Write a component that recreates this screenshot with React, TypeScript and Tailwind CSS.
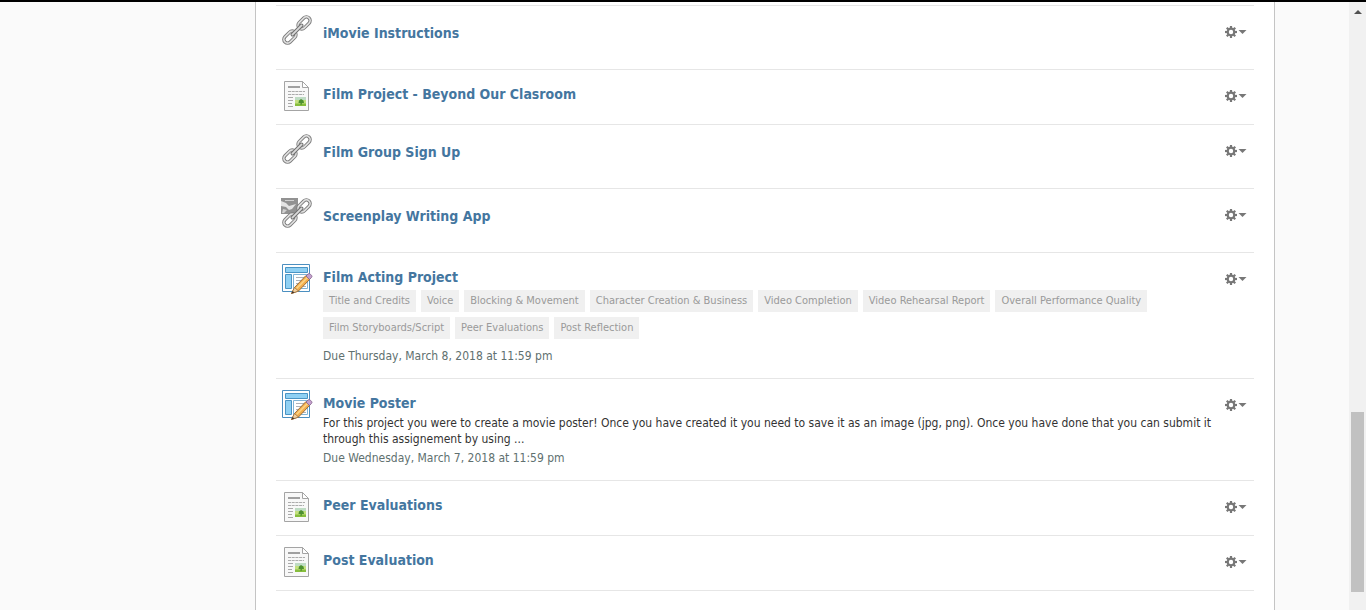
import React from "react";

type Kind = "link" | "thumbLink" | "page" | "assignment";

interface Item {
  title: string;
  kind: Kind;
  tags?: string[];
  text?: string;
  due?: string;
}

const items: Item[] = [
  { title: "iMovie Instructions", kind: "link" },
  { title: "Film Project - Beyond Our Clasroom", kind: "page" },
  { title: "Film Group Sign Up", kind: "link" },
  { title: "Screenplay Writing App", kind: "thumbLink" },
  {
    title: "Film Acting Project",
    kind: "assignment",
    tags: [
      "Title and Credits",
      "Voice",
      "Blocking & Movement",
      "Character Creation & Business",
      "Video Completion",
      "Video Rehearsal Report",
      "Overall Performance Quality",
      "Film Storyboards/Script",
      "Peer Evaluations",
      "Post Reflection",
    ],
    due: "Due Thursday, March 8, 2018 at 11:59 pm",
  },
  {
    title: "Movie Poster",
    kind: "assignment",
    text: "For this project you were to create a movie poster! Once you have created it you need to save it as an image (jpg, png). Once you have done that you can submit it through this assignement by using ...",
    due: "Due Wednesday, March 7, 2018 at 11:59 pm",
  },
  { title: "Peer Evaluations", kind: "page" },
  { title: "Post Evaluation", kind: "page" },
];

function Chain({ thumb = false }: { thumb?: boolean }) {
  return (
    <svg width="32" height="32" viewBox="0 0 32 32" fill="none" aria-hidden="true">
      {thumb && (
        <g>
          <path d="M0 1h17v16H0z" fill="#929292" />
          <path d="M0 4l5 2 3 3 7-2-4 5-3 1-3-3-5-1z" fill="#e4e4e4" />
          <path d="M4 3h9v1H4zM2 12l4 1-3 3H1z" fill="#d0d0d0" />
        </g>
      )}
      <g transform="rotate(-45 16 16)">
        <rect x="-1" y="12.300" width="14" height="7.400" rx="3.700" stroke="#7c7c7c" strokeWidth="3.400" />
        <rect x="-1" y="12.300" width="14" height="7.400" rx="3.700" stroke="#e2e2e2" strokeWidth="1.600" />
        <rect x="19" y="12.300" width="14" height="7.400" rx="3.700" stroke="#7c7c7c" strokeWidth="3.400" />
        <rect x="19" y="12.300" width="14" height="7.400" rx="3.700" stroke="#e2e2e2" strokeWidth="1.600" />
        <path d="M9.500 16h13" stroke="#707070" strokeWidth="3.800" strokeLinecap="round" />
        <path d="M9.500 16h13" stroke="#dadada" strokeWidth="1.800" strokeLinecap="round" />
      </g>
    </svg>
  );
}

function PageIcon() {
  return (
    <svg width="32" height="32" viewBox="0 0 32 32" aria-hidden="true">
      <path d="M3.500 1.500h18l6 6v23h-24z" fill="#f8f8f8" stroke="#a4a4a4" />
      <path d="M21.500 1.500v6h6z" fill="#fff" stroke="#a4a4a4" />
      <path d="M7 7h12" stroke="#a0a0a0" strokeWidth="2" />
      <path d="M7 11.500h17M7 14.500h16" stroke="#acacac" strokeDasharray="3 .7" />
      <path d="M7 17.500h5M7 20.500h5M7 23.500h4M7 26.500h5" stroke="#a8a8a8" />
      <path d="M14 17h11v9H14z" fill="#c3e07e" />
      <path d="M14 17h11v3H14z" fill="#bfdcc4" />
      <path d="M14 23.500h11V26H14z" fill="#86bd3c" />
      <path d="M20.500 25h-1v-2H17.500l.5-2.500 2-1.500 2.500 1.500.5 2.500h-2z" fill="#4c9030" />
    </svg>
  );
}

function AssignmentIcon() {
  return (
    <svg width="32" height="32" viewBox="0 0 32 32" aria-hidden="true">
      <path d="M1.500 1.500h27v27h-27z" fill="#fff" stroke="#4b8fc0" />
      <path d="M4.500 4.500h22v5h-22z" fill="#8fd0f3" stroke="#4a94c4" />
      <path d="M4.500 11.500h6v14h-6z" fill="#8fd0f3" stroke="#4a94c4" />
      <path d="M12.500 25.500v-14h14v14z" fill="none" stroke="#7fb4d6" />
      <path d="M15 14.500h8M15 17.500h6M15 20.500h3M24 20.500h1M22 23.500h3" stroke="#aeb2b8" />
      <path d="M13.500 24.500L25 12.500l4 3.500-11.500 12L10.500 30.500z" fill="#f3ae4c" stroke="#9a6c38" strokeLinejoin="round" />
      <path d="M15.500 25.500L27 14" stroke="#fcd588" strokeWidth="1.600" />
      <path d="M13.500 24.500l-3 6 7-2.500z" fill="#f0d0a0" stroke="#9a6c38" strokeWidth=".7" />
      <path d="M10.500 30.500l1.200-2.600 1.800 1.500z" fill="#403028" />
      <path d="M25 13l2-2q1.200-1 2.500.3l1 1q1 1.200 0 2.200L28.500 16.500z" fill="#c3a0cc" stroke="#82608b" strokeWidth=".8" />
    </svg>
  );
}

function ItemIcon({ kind }: { kind: Kind }) {
  if (kind === "page") return <PageIcon />;
  if (kind === "assignment") return <AssignmentIcon />;
  return <Chain thumb={kind === "thumbLink"} />;
}

const teeth = [0, 45, 90, 135, 180, 225, 270, 315];

function GearButton({ title }: { title: string }) {
  return (
    <button type="button" aria-label={`Options for ${title}`} className="mt-5 flex h-3 shrink-0 items-center">
      <svg width="22" height="12" viewBox="0 0 22 12" aria-hidden="true">
        <circle cx="6" cy="6" r="3.300" fill="none" stroke="#777" strokeWidth="2.200" />
        {teeth.map((a) => (
          <path key={a} d="M4.900 0h2.200v2.500H4.900z" fill="#777" transform={`rotate(${a} 6 6)`} />
        ))}
        <path d="M13.500 4h8l-4 4z" fill="#777" />
      </svg>
    </button>
  );
}

function Row({ item }: { item: Item }) {
  const isLink = item.kind === "link" || item.kind === "thumbLink";
  return (
    <li className="flex items-start border-b border-[#e6e6e6] pr-[7px] pl-[5px]">
      <div className={isLink ? "w-[42px] shrink-0 pt-2" : "w-[42px] shrink-0 pt-2.5"}>
        <ItemIcon kind={item.kind} />
      </div>
      <div className={isLink ? "min-w-0 flex-1 pt-[17px] pb-[26px]" : "min-w-0 flex-1 pt-3.5 pb-3"}>
        <h3 className={item.kind === "page" ? "pb-2 text-sm leading-5 font-bold" : "text-sm leading-5 font-bold"}>
          <a href="#" className="text-[#44769f]">{item.title}</a>
        </h3>
        {item.tags && (
          <ul className="mt-[3px] flex max-w-[850px] flex-wrap gap-[5px] pb-[9px]">
            {item.tags.map((tag) => (
              <li key={tag} className="bg-[#f0f0f0] px-1.5 text-[11px] leading-[22px] text-[#9a9a9a]">{tag}</li>
            ))}
          </ul>
        )}
        {item.text && <p className="mt-0.5 mb-[3px] max-w-[900px] text-xs leading-4 text-[#333]">{item.text}</p>}
        {item.due && <p className="pb-0.5 text-xs leading-4 text-[#60706f]">{item.due}</p>}
      </div>
      <GearButton title={item.title} />
    </li>
  );
}

export default function App() {
  return (
    <div className="flex h-screen flex-col overflow-hidden bg-[#fafafa] font-['DejaVu_Sans_Condensed','DejaVu_Sans',sans-serif]">
      <div className="h-0.5 shrink-0 bg-black" />
      <div className="flex min-h-0 flex-1">
        <div className="flex min-w-0 flex-1 justify-center pr-[74px] pl-[255px]">
          <main className="min-w-0 flex-1 border-x border-[#c4c4c4] bg-white px-5 pt-[3px]">
            <ul className="border-t border-[#e6e6e6]">
              {items.map((item) => (
                <Row key={item.title} item={item} />
              ))}
            </ul>
          </main>
        </div>
        <div className="flex w-[17px] shrink-0 flex-col items-center bg-[#f1f1f1] pt-2 pb-[18px]">
          <svg width="8" height="4" viewBox="0 0 8 4" aria-hidden="true">
            <path d="M0 4l4-4 4 4z" fill="#505050" />
          </svg>
          <div className="mt-auto h-[31%] w-[13px] bg-[#c1c1c1]" />
        </div>
      </div>
    </div>
  );
}
